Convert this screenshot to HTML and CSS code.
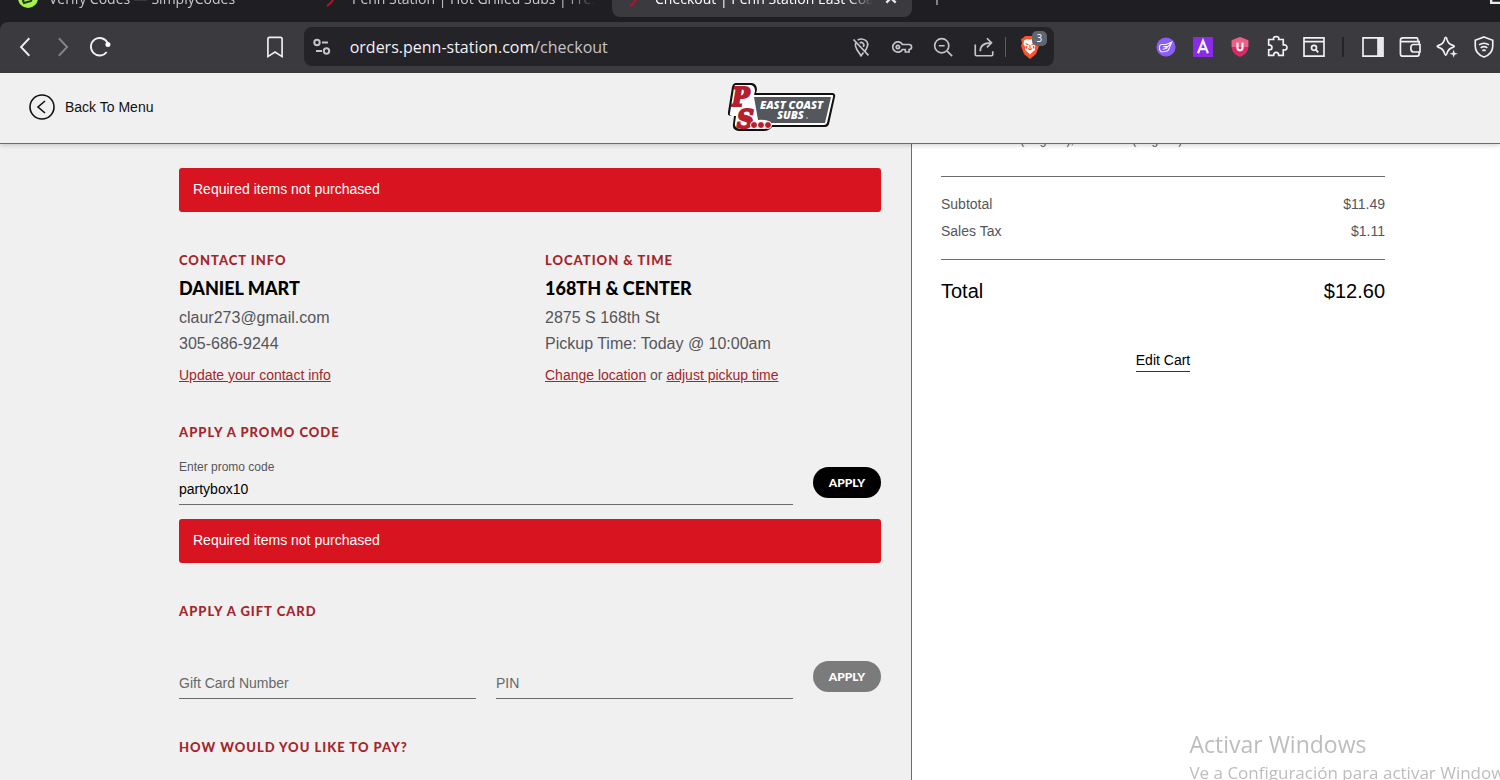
FILE: index.html
```
<!DOCTYPE html>
<html lang="en">

<head>
  <meta charset="UTF-8">
  <meta name="viewport" content="width=device-width, initial-scale=1.0">
  <title>Checkout | Penn Station East Coast Subs</title>
  <link rel="stylesheet" href="styles.css">
</head>

<body>
  <div class="browser">
    <div class="tabs">
      <div class="tab">
        <svg class="favicon" viewBox="0 0 20 20"><circle cx="10" cy="10" r="10" fill="#a6f04b"/><path d="M5 13l2-4 8-1-2 5-7 2z" fill="none" stroke="#26331a" stroke-width="2"/></svg>
        <span class="tab-title">Verify Codes — SimplyCodes</span>
      </div>
      <div class="tab">
        <svg class="favicon" viewBox="0 0 20 20"><path d="M6 18q6-3 9-14" fill="none" stroke="#b3142c" stroke-width="2"/></svg>
        <span class="tab-title">Penn Station | Hot Grilled Subs | Fresh Cut Fries</span>
      </div>
      <div class="tab active">
        <svg class="favicon" viewBox="0 0 20 20"><path d="M6 18q6-3 9-14" fill="none" stroke="#b3142c" stroke-width="2"/></svg>
        <span class="tab-title">Checkout | Penn Station East Coast Subs</span>
        <button class="tab-close" aria-label="Close tab"><svg viewBox="0 0 12 12"><path d="M2 2l8 8M10 2l-8 8"/></svg></button>
      </div>
      <button class="tab-new" aria-label="New tab"><svg viewBox="0 0 14 14"><path d="M7 0v14M0 7h14"/></svg></button>
      <button class="win-size" aria-label="Restore window"><svg viewBox="0 0 12 12"><path d="M1 1h10v10H1z"/></svg></button>
    </div>

    <div class="toolbar">
      <div class="tools">
        <button class="tool" aria-label="Back"><svg viewBox="0 0 24 24"><path d="M16 1.500L6 12l10 10.500" stroke-width="2.200"/></svg></button>
        <button class="tool dim" aria-label="Forward"><svg viewBox="0 0 24 24"><path d="M7 1.500L17 12 7 22.500" stroke-width="2.200"/></svg></button>
        <button class="tool" aria-label="Reload"><svg viewBox="0 0 24 24"><path d="M20 18A10.500 10.500 0 1 1 21 7" stroke-width="2.200"/><circle cx="21.500" cy="9" r="3" fill="#fff" stroke="none"/></svg></button>
      </div>
      <button class="tool bookmark" aria-label="Bookmark"><svg viewBox="0 0 24 24"><path d="M3.500 2.500q0-2 2-2h13q2 0 2 2v21L12 18l-8.500 5.500z" stroke-width="2"/></svg></button>
      <div class="address">
        <button class="site" aria-label="Site information"><svg viewBox="0 0 20 20"><circle cx="5" cy="5.500" r="2.700"/><path d="M10 5.500h6M4 14h6"/><circle cx="14.500" cy="14" r="2.700"/></svg></button>
        <span class="url">orders.penn-station.com<span>/checkout</span></span>
        <button class="tool" aria-label="Location blocked"><svg viewBox="0 0 24 24"><path d="M3 3l18 19M8 3.500Q13 1 17.500 4t1 10L17 16.500M5.500 7q-1 4 1.500 8l5 7.500 3-4M10.500 7.500q2-2 4 0t0 4"/></svg></button>
        <button class="tool" aria-label="Passwords"><svg viewBox="0 0 24 24"><path d="M12.500 9a6.200 6.200 0 1 0 0 6h3.500v3h4.500v-3q3 0 3-3t-3-3z"/><circle cx="7" cy="12" r="2"/></svg></button>
        <button class="tool" aria-label="Zoom"><svg viewBox="0 0 24 24"><circle cx="10.500" cy="10.500" r="8.500"/><path d="M17 17l6 6M7 10.500h7"/></svg></button>
        <button class="tool" aria-label="Share"><svg viewBox="0 0 24 24"><path d="M1.500 9v12q0 1.500 1.500 1.500h18q1.500 0 1.500-1.500v-4M7.500 17q0-10 13-10M15.500 1.500L21 7l-5.500 5.500"/></svg></button>
        <span class="address-line"></span>
        <button class="shields" aria-label="Shields">
          <svg viewBox="0 0 20 24"><path d="M5 1h10l2 2 2 1-1 4 1 3-3 8-6 5-6-5L1 11l1-3-1-4 2-1z" fill="#fb542b"/><path d="M4 5.500l3-1.500 3 .5 3-.5 3 1.500.5 4-2 2.500.5 3-3 2.500-2 2-2-2L5 15l.5-3-2-2.500z" fill="#fff"/><path d="M5.500 8.500l3 1.200M14.500 8.500l-3 1.200M10 10v3.500M8 13.500l2 1.200 2-1.200M6.500 11v2.500M13.500 11v2.500" fill="none" stroke="#fb542b" stroke-width="1.200"/></svg>
          <span class="shields-count">3</span>
        </button>
      </div>
      <div class="tools extensions">
        <button class="tool" aria-label="SimplyCodes"><svg viewBox="0 0 24 24"><circle cx="12" cy="12" r="11.500" fill="#8b5cf6" stroke="none"/><path d="M4 13q0-4 3-4h5l7-3-3 7q-1 4-4 4l-5 1q-3-1-3-5zM8 15q5-1 10-8M9 11.500h4v2.500" stroke-width="1.300"/></svg></button>
        <button class="tool" aria-label="Extension A"><svg viewBox="0 0 24 24"><path d="M0 0h24v24H0z" fill="#8a2be8" stroke="none"/><path d="M6 19.500l6-15 6 15M8 14.500h8" stroke-width="2.600"/></svg></button>
        <button class="tool" aria-label="Extension U"><svg viewBox="0 0 24 24"><path d="M12 0l10 4v8q0 8-10 12Q2 20 2 12V4z" fill="#d92b62" stroke="none"/><path d="M12 0l10 4v8H2V4z" fill="#ec5f86" stroke="none"/><path d="M9 6.500V13q0 3 3 3t3-3V6.500" stroke-width="2.600"/></svg></button>
        <button class="tool" aria-label="Extensions"><svg viewBox="0 0 24 24"><path d="M2 3h6q-1-3.500 3-3.500T14 3h5.500v6.500q4.500-.5 4.500 3t-4.500 3V22H14q0-3.500-3-3.500T8 22H2v-6.500q4 0 4-3t-4-3z" stroke-width="2"/></svg></button>
        <button class="tool" aria-label="Page search"><svg viewBox="0 0 24 24"><path d="M0 1h24v22H0zM0 5.500h24" stroke-width="2"/><circle cx="12" cy="13" r="3"/><path d="M14 15l3 3.500" stroke-width="2.200"/></svg></button>
        <span class="tools-line"></span>
        <button class="tool" aria-label="Sidebar"><svg viewBox="0 0 24 24"><path d="M0 1h24v22H0z" stroke-width="2"/><path d="M17 1h7v22h-7z" fill="#e9e9ed" stroke="none"/></svg></button>
        <button class="tool" aria-label="Wallet"><svg viewBox="0 0 24 24"><path d="M23 9V5.500H.5V4q0-3 3-3H20q1.500 0 1.500 4M.5 5v15q0 3 3 3H20q3 0 3-3v-2M24 9h-8q-3 0-3 4.500t3 4.500h8z" stroke-width="2"/></svg></button>
        <button class="tool" aria-label="Leo AI"><svg viewBox="0 0 24 24"><path d="M10.500.5q1 0 1.500 2.500 1.500 5.500 7 7 3.500 1 0 2.500-5.500 1.500-7 7-1.500 4.500-3 0-1.500-5.500-7-7-3.500-1.500 0-2.500 5.500-1.500 7-7Q9.500.5 10.500.5z" stroke-width="2"/><path d="M20 15l1.200 3.800L25 20l-3.800 1.200L20 25l-1.200-3.800L15 20l3.800-1.200z" fill="#e9e9ed" stroke="none"/></svg></button>
        <button class="tool" aria-label="VPN"><svg viewBox="0 0 24 24"><path d="M12 0l10.500 4v7q0 9-10.500 13Q1.500 20 1.500 11V4z" stroke-width="2"/><path d="M6 9.500q6-4 12 0M8 13q4-3 8 0M10 16.500q2-1.500 4 0" stroke-width="2"/></svg></button>
      </div>
    </div>
  </div>

  <header class="site-header">
    <a class="back" href="#menu">
      <svg viewBox="0 0 26 26"><circle cx="13" cy="13" r="12"/><path d="M16 7l-7 6 7 6"/></svg>
      Back To Menu
    </a>
    <a class="logo" href="#home" aria-label="Penn Station East Coast Subs">
      <svg viewBox="0 0 108 48">
        <path d="M8 0h16q5 1 5 7l-1 3h77q3 1 2 4l-6 27q-1 3-4 3H44q-3 4-8 4H11Q4 47 5 41l1-8H3q-4 0-3-4L4 4q1-4 4-4z" fill="#111"/>
        <path d="M8 2h15q4 1 4 6l-1 4h78q2 0 1 2l-6 26q-1 2-3 2H43q-3 4-7 4H12q-6-1-5-6l1-7H4q-3 0-2-3L6 5q0-3 2-3z" fill="#fff"/>
        <path d="M26 14h77l-6 26H43q-4-4-13-3z" fill="#54585c"/>
        <text class="logo-initial" x="4" y="23">P</text>
        <text class="logo-initial" x="9" y="45">S</text>
        <g fill="#b51f2e" stroke="#fff"><circle cx="26" cy="42" r="3.500"/><circle cx="33" cy="42" r="3.500"/><circle cx="40" cy="42" r="3.500"/></g>
        <text class="logo-name" x="32" y="26">EAST COAST</text>
        <text class="logo-name" x="49" y="36">SUBS</text>
        <circle cx="79" cy="35" r="1" fill="#aaa"/>
      </svg>
    </a>
  </header>

  <main class="checkout">
    <div class="details">
      <div class="details-inner">
        <p class="alert" role="alert">Required items not purchased</p>

        <div class="info">
          <section>
            <h2>Contact Info</h2>
            <h3>Daniel Mart</h3>
            <p>claur273@gmail.com</p>
            <p>305-686-9244</p>
            <p class="links"><a href="#contact">Update your contact info</a></p>
          </section>
          <section>
            <h2>Location &amp; Time</h2>
            <h3>168th &amp; Center</h3>
            <p>2875 S 168th St</p>
            <p>Pickup Time: Today @ 10:00am</p>
            <p class="links"><a href="#location">Change location</a> or <a href="#time">adjust pickup time</a></p>
          </section>
        </div>

        <section class="promo">
          <h2>Apply a Promo Code</h2>
          <form class="code-form">
            <div class="field">
              <label for="promo">Enter promo code</label>
              <input id="promo" type="text" value="partybox10">
            </div>
            <button class="apply" type="button">Apply</button>
          </form>
          <p class="alert" role="alert">Required items not purchased</p>
        </section>

        <section class="gift">
          <h2>Apply a Gift Card</h2>
          <form class="code-form">
            <div class="field">
              <input type="text" placeholder="Gift Card Number" aria-label="Gift Card Number">
            </div>
            <div class="field">
              <input type="text" placeholder="PIN" aria-label="PIN">
            </div>
            <button class="apply" type="button" disabled>Apply</button>
          </form>
        </section>

        <section class="pay">
          <h2>How would you like to pay?</h2>
        </section>
      </div>
    </div>

    <aside class="summary">
      <div class="summary-inner">
        <p class="options">Grilled Onions (Regular), Tomatoes (Regular)</p>
        <dl class="lines">
          <div><dt>Subtotal</dt><dd>$11.49</dd></div>
          <div><dt>Sales Tax</dt><dd>$1.11</dd></div>
        </dl>
        <dl class="total">
          <div><dt>Total</dt><dd>$12.60</dd></div>
        </dl>
        <a class="edit" href="#cart">Edit Cart</a>
      </div>
    </aside>
  </main>

  <div class="watermark">
    <p>Activar Windows</p>
    <p>Ve a Configuración para activar Windows.</p>
  </div>
</body>

</html>
```
FILE: styles.css
```
* {
  box-sizing: border-box;
  margin: 0;
  padding: 0;
}

body {
  display: flex;
  flex-direction: column;
  height: 100vh;
  overflow: hidden;
  background: #f0f0f0;
  color: #54565b;
  font-family: "Liberation Sans", Arial, sans-serif;
  font-size: 14px;
}

button {
  border: 0;
  background: none;
  font: inherit;
  cursor: pointer;
}

svg {
  display: block;
}

/* browser window */

.browser {
  flex: none;
  background: #1f1e23;
  font-family: "Open Sans", "Noto Sans", sans-serif;
}

.tabs {
  display: flex;
  align-items: flex-end;
  height: 22px;
  padding: 0 0 5px 6px;
  overflow: hidden;
}

.tab {
  display: flex;
  flex: 0 1 300px;
  align-items: center;
  gap: 11px;
  min-width: 0;
  height: 38px;
  margin-right: 3px;
  padding: 0 14px 0 12px;
  color: #c8c8cd;
}

.tab.active {
  border-radius: 8px;
  background: #3b3a3f;
  color: #fff;
}

.favicon {
  flex: none;
  width: 20px;
  height: 20px;
}

.tab-title {
  flex: 1;
  overflow: hidden;
  white-space: nowrap;
  mask-image: linear-gradient(to right, #000 88%, transparent);
}

.tab-close,
.tab-new,
.win-size {
  flex: none;
  width: 14px;
  fill: none;
  stroke: #e9e9ed;
  stroke-width: 2;
}

.tab-new {
  margin: 0 0 12px 15px;
  stroke-width: 1;
}

.win-size {
  margin: 0 -4px 13px auto;
}

.toolbar {
  display: grid;
  grid-template-columns: auto 137fr auto 751fr 92fr auto;
  align-items: center;
  height: 51px;
  padding: 0 0 2px 7px;
  border-radius: 8px 0 0;
  background: #3b3a3f;
}

.tools {
  display: flex;
  align-items: center;
}

.extensions {
  grid-column: 6;
  margin-right: -2px;
}

.tool {
  display: flex;
  flex: none;
  justify-content: center;
  width: 37px;
}

.tool svg {
  width: 20px;
  height: 20px;
  overflow: visible;
  fill: none;
  stroke: #f1f1f4;
  stroke-width: 2;
}

.tool.dim svg {
  stroke: #85858a;
}

.bookmark {
  grid-column: 3;
}

.tools-line {
  width: 2px;
  height: 20px;
  margin: 0 10px;
  background: #242328;
}

.address {
  display: flex;
  align-items: center;
  height: 39px;
  margin-left: 10px;
  padding: 0 8px;
  border-radius: 8px;
  background: #242328;
}

.address .tool {
  width: 41px;
}

.address .tool svg,
.site svg {
  stroke: #c4c4ca;
}

.site {
  width: 22px;
}

.site svg {
  width: 20px;
  height: 20px;
  fill: none;
  stroke-width: 2;
}

.url {
  flex: 1;
  padding-left: 16px;
  color: #f1f1f4;
  font-size: 16px;
}

.url span {
  color: #c4c4ca;
}

.address-line {
  width: 1px;
  height: 20px;
  background: #5c5c62;
}

.shields {
  position: relative;
  width: 40px;
  padding-left: 14px;
}

.shields svg {
  width: 20px;
  height: 24px;
}

.shields-count {
  position: absolute;
  top: -4px;
  right: -1px;
  width: 15px;
  height: 15px;
  border-radius: 5px;
  background: #61656f;
  color: #fff;
  font-size: 10px;
  line-height: 15px;
}

/* restaurant header */

.site-header {
  display: grid;
  flex: none;
  grid-template-columns: 699fr auto 664fr;
  align-items: center;
  height: 71px;
  padding: 0 0 2px 29px;
  border-bottom: 1px solid #6b6c6e;
  background: #f0f0f0;
  box-shadow: 0 1px 5px rgb(0 0 0 / 20%);
  z-index: 1;
}

.back {
  display: flex;
  align-items: center;
  gap: 10px;
  color: #111;
  text-decoration: none;
}

.back svg {
  width: 26px;
  height: 26px;
  fill: none;
  stroke: #111;
  stroke-width: 1.6;
}

.logo svg {
  width: 108px;
  height: 48px;
}

.logo-initial {
  fill: #b51f2e;
  stroke: #b51f2e;
  stroke-width: 2;
  font: italic 700 26px "DejaVu Serif Condensed", "DejaVu Serif", serif;
}

.logo-name {
  fill: #fff;
  font: italic 800 11px "Open Sans", sans-serif;
}

/* checkout */

.checkout {
  display: grid;
  flex: 1;
  grid-template-columns: 911fr 589fr;
  min-height: 0;
  overflow: hidden;
}

.details {
  padding: 24px 30px 0;
}

.details-inner {
  max-width: 702px;
  margin-left: auto;
}

.alert {
  padding: 10px 14px 12px;
  border-radius: 3px;
  background: #d81421;
  color: #fff;
  line-height: 22px;
}

h2,
h3,
.apply {
  font-family: Lato, sans-serif;
  text-transform: uppercase;
}

h2 {
  color: #a4262c;
  font-size: 13px;
  font-weight: 900;
  letter-spacing: 1px;
  line-height: 20px;
}

h3 {
  margin: 4px 0 3px;
  color: #000;
  font-size: 18px;
  font-weight: 900;
  line-height: 28px;
}

.info {
  display: grid;
  grid-template-columns: 1fr 1fr;
  gap: 30px;
  margin: 38px 0 37px;
  font-size: 16px;
  line-height: 26px;
}

.links {
  margin-top: 8px;
  font-size: 14px;
  line-height: 20px;
}

.links a {
  color: #a4262c;
}

.code-form {
  display: flex;
  align-items: flex-end;
  gap: 20px;
}

.promo .code-form {
  margin: 17px 0 14px;
}

.gift {
  margin: 38px 0;
}

.gift .code-form {
  margin-top: 32px;
}

.field {
  display: flex;
  flex: 1;
  flex-direction: column;
  justify-content: flex-end;
  min-height: 46px;
}

.field label {
  font-size: 12px;
  line-height: 16px;
}

.field input {
  width: 100%;
  height: 30px;
  padding-bottom: 2px;
  border: 0;
  border-bottom: 1px solid #6b6c6e;
  background: none;
  color: #000;
  font: inherit;
}

.field input::placeholder {
  color: #66686c;
}

.apply {
  width: 68px;
  height: 31px;
  margin-bottom: 7px;
  border-radius: 16px;
  background: #000;
  color: #fff;
  font-size: 12px;
  font-weight: 900;
}

.apply:disabled {
  background: #7b7b7b;
}

/* order summary */

.summary {
  padding: 0 29px;
  border-left: 1px solid #6b6c6e;
  background: #fff;
}

.summary-inner {
  display: flex;
  flex-direction: column;
  max-width: 444px;
}

.options {
  margin-top: -12px;
  font-size: 12px;
  line-height: 16px;
}

.lines,
.total {
  border-top: 1px solid #6b6c6e;
}

.lines {
  margin-top: 28px;
  padding: 14px 0;
  line-height: 27px;
}

.total {
  padding-top: 17px;
  color: #000;
  font-size: 20px;
  line-height: 28px;
}

.lines div,
.total div {
  display: flex;
  justify-content: space-between;
}

.edit {
  align-self: center;
  margin-top: 45px;
  border-bottom: 1px solid #333;
  color: #000;
  line-height: 21px;
  text-decoration: none;
}

/* desktop notice, drawn over every window */

.watermark {
  position: fixed;
  right: -17px;
  bottom: -6px;
  z-index: 2;
  color: #bdbdbd;
  font-family: "Open Sans", "Noto Sans", sans-serif;
  font-size: 17px;
  line-height: 26px;
}

.watermark p:first-child {
  font-size: 23px;
  line-height: 32px;
}
```
